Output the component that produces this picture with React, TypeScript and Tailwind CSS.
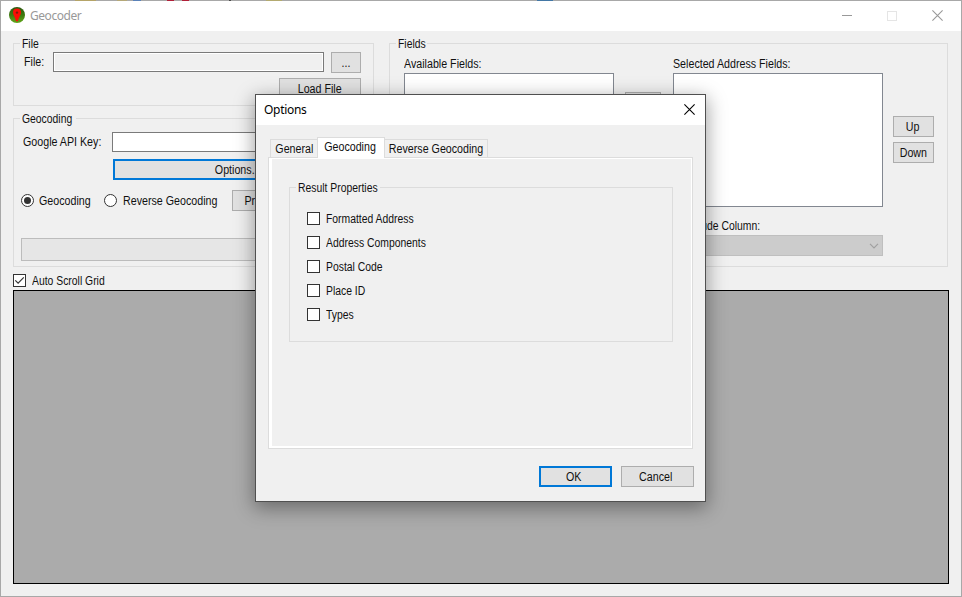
import type { ReactNode } from 'react';

const UI = "font-['Liberation_Sans',Arial,sans-serif] text-[12px] text-[#101010]";
const CAPTION = "font-['Noto_Sans','Open_Sans',sans-serif] text-[12px] leading-4";

type TextProps = { children: ReactNode; className?: string; centered?: boolean; tight?: boolean };

function Text({ children, className = '', centered = false, tight = false }: TextProps) {
  return (
    <span
      className={`block leading-4 whitespace-pre ${centered ? 'origin-center' : 'origin-left'} ${
        tight ? 'scale-x-[0.865]' : 'scale-x-[0.89]'
      } ${className}`}
    >
      {children}
    </span>
  );
}

function Group({ title, legend, className, children }: { title: string; legend: string; className: string; children?: ReactNode }) {
  return (
    <section className={`relative border border-[#dcdcdc] ${className}`}>
      <div className={`absolute -top-[8px] left-[6px] bg-[#f0f0f0] pl-[2px] ${legend}`}>
        <Text tight>{title}</Text>
      </div>
      {children}
    </section>
  );
}

function Button({ children, className = '', primary = false }: { children?: ReactNode; className?: string; primary?: boolean }) {
  return (
    <button
      className={`flex h-[21px] shrink-0 items-center justify-center bg-[#e1e1e1] ${
        primary ? 'border-2 border-[#0078d7]' : 'border border-[#adadad]'
      } ${className}`}
    >
      {children}
    </button>
  );
}

function Radio({ on = false }: { on?: boolean }) {
  return (
    <span className="flex size-[13px] shrink-0 items-center justify-center rounded-full border border-[#333] bg-white">
      {on && <span className="size-[7px] rounded-full bg-[#333]" />}
    </span>
  );
}

function CheckBox({ on = false }: { on?: boolean }) {
  return (
    <span className="mt-[1px] flex size-[13px] shrink-0 items-center justify-center border border-[#333] bg-white">
      {on && (
        <svg width="11" height="11" viewBox="0 0 11 11" fill="none" stroke="#333" strokeWidth="1.2">
          <path d="M1.3 5.3 4.1 8.1 9.8 2.4" />
        </svg>
      )}
    </span>
  );
}

function Pin() {
  return (
    <svg width="16" height="16" viewBox="0 0 16 16" className="shrink-0">
      <defs>
        <linearGradient id="green" x1="0" y1="0" x2="0" y2="1">
          <stop offset="0" stopColor="#2c5a10" />
          <stop offset="0.5" stopColor="#3f7a10" />
          <stop offset="1" stopColor="#62a81c" />
        </linearGradient>
      </defs>
      <circle cx="8" cy="8" r="8" fill="url(#green)" />
      <path d="M8 1.4a4 4 0 0 0-4 4c0 2.5 2.2 4.2 3 8.8h2c.8-4.6 3-6.3 3-8.8a4 4 0 0 0-4-4Z" fill="#fb0d06" />
      <circle cx="8" cy="5.6" r="1.2" fill="#7b1c0c" />
    </svg>
  );
}

function CloseIcon({ color }: { color: string }) {
  return (
    <svg width="11" height="11" viewBox="0 0 11 11" stroke={color} strokeWidth="1.1" className="shrink-0">
      <path d="M.4.4 10.6 10.6M10.6.4.4 10.6" />
    </svg>
  );
}

function DesktopEdge() {
  return (
    <div className="absolute -top-px -left-px flex h-px w-[962px] bg-[#a8a8a8]">
      <span className="ml-[75px] w-[21px] bg-[#b5a468]" />
      <span className="ml-[21px] w-[10px] bg-[#b5a878]" />
      <span className="ml-[6px] w-[8px] bg-[#5a82b8]" />
      <span className="ml-[26px] w-[7px] bg-[#b02038]" />
      <span className="ml-[8px] w-[7px] bg-[#b02038]" />
      <span className="ml-[40px] w-[2px] bg-[#4c4c4c]" />
      <span className="ml-[35px] w-[16px] bg-[#b3aa70]" />
      <span className="ml-[255px] w-[16px] bg-[#4377a5]" />
    </div>
  );
}

const resultProperties = ['Formatted Address', 'Address Components', 'Postal Code', 'Place ID', 'Types'];

function OptionsDialog() {
  return (
    <div
      role="dialog"
      className="absolute top-[93px] left-[254px] flex h-[408px] w-[451px] flex-col border border-[#505050] bg-[#f0f0f0] shadow-[0_5px_18px_1px_rgba(0,0,0,0.38)]"
    >
      <header className={`flex h-[30px] items-start justify-between bg-white pt-[7px] pr-[10px] pl-[8px] tracking-[-0.3px] text-black ${CAPTION}`}>
        <span>Options</span>
        <span className="pt-[2px]">
          <CloseIcon color="#000" />
        </span>
      </header>

      <div className="flex h-[32px] items-end pl-[14px]">
        <div className="flex h-[18px] w-[47px] justify-center border border-r-0 border-b-0 border-[#dcdcdc] pt-[1px]">
          <Text centered>General</Text>
        </div>
        <div className="z-10 -mb-[1px] flex h-[21px] w-[68px] justify-center border border-b-0 border-[#dcdcdc] bg-white pt-[1px]">
          <Text centered className="mr-[1px]">Geocoding</Text>
        </div>
        <div className="flex h-[18px] w-[103px] justify-center border border-b-0 border-l-0 border-[#dcdcdc] pt-[1px]">
          <Text centered>Reverse Geocoding</Text>
        </div>
      </div>

      <div className="ml-[12px] h-[292px] w-[425px] border border-[#dcdcdc] bg-white pt-[1px] pr-[1px] pb-[2px] pl-[3px]">
        <div className="h-full bg-[#f0f0f0] pt-[28px] pl-[17px]">
          <Group title="Result Properties" legend="w-[84px]" className="flex h-[155px] w-[384px] flex-col gap-[8px] pt-[23px] pl-[17px]">
            {resultProperties.map((name) => (
              <label key={name} className="flex h-[16px] items-start gap-[6px]">
                <CheckBox />
                <Text tight>{name}</Text>
              </label>
            ))}
          </Group>
        </div>
      </div>

      <footer className="mt-[17px] flex justify-end gap-[9px] pr-[11px]">
        <Button primary className="w-[73px]">
          <Text centered className="mr-[3px]">OK</Text>
        </Button>
        <Button className="w-[73px]">
          <Text centered className="mr-[3px]">Cancel</Text>
        </Button>
      </footer>
    </div>
  );
}

export default function App() {
  return (
    <div className={`relative flex h-[597px] w-[962px] flex-col overflow-clip border border-[#a8a8a8] bg-[#f0f0f0] [overflow-clip-margin:border-box] ${UI}`}>
      <DesktopEdge />
      <header className={`flex h-[30px] shrink-0 items-start bg-white pt-[6px] pl-[8px] tracking-[-0.45px] text-[#999] ${CAPTION}`}>
        <Pin />
        <span className="ml-[5px] pt-[1px]">Geocoder</span>
        <div className="ml-auto flex items-center gap-[35px] pt-[3px] pr-[18px]">
          <span className="h-px w-[10px] bg-[#999]" />
          <span className="size-[10px] border border-[#e5e5e5]" />
          <CloseIcon color="#999" />
        </div>
      </header>

      <main className="flex flex-col pt-[12px] pl-[12px]">
        <div className="flex gap-[15px]">
          <div className="flex w-[361px] flex-col gap-[12px]">
            <Group title="File" legend="w-[20px]" className="h-[63px] pt-[8px] pr-[12px] pl-[10px]">
              <div className="flex">
                <Text className="mt-[2px] w-[29px]">File:</Text>
                <div className="mr-[7px] h-[20px] w-[271px] border border-[#7a7a7a] bg-[#f0f0f0] shadow-[inset_0_0_0_1px_#fff]" />
                <Button className="w-[30px]">
                  <Text centered>...</Text>
                </Button>
              </div>
              <Button className="mt-[5px] ml-auto w-[82px]">
                <Text centered className="mr-[1px]">Load File</Text>
              </Button>
            </Group>

            <Group title="Geocoding" legend="w-[56px]" className="h-[149px] pt-[13px] pl-[7px]">
              <div className="flex pl-[2px]">
                <Text className="mt-[2px] w-[89px]">Google API Key:</Text>
                <div className="h-[20px] w-[249px] border border-[#7a7a7a] bg-white" />
              </div>
              <Button primary className="mt-[7px] ml-[92px] w-[249px]">
                <Text centered>Options...</Text>
              </Button>
              <div className="mt-[10px] flex items-center">
                <Radio on />
                <Text className="ml-[5px] w-[65px]">Geocoding</Text>
                <Radio />
                <Text className="ml-[6px] w-[109px]">Reverse Geocoding</Text>
                <Button className="w-[66px]">
                  <Text centered className="mr-[3px]">Process</Text>
                </Button>
              </div>
              <div className="mt-[27px] h-[23px] w-[340px] border border-[#bcbcbc] bg-[#e6e6e6]" />
            </Group>
          </div>

          <Group title="Fields" legend="w-[31px]" className="flex h-[224px] w-[559px] pl-[14px]">
            <div className="w-[210px] pt-[12px]">
              <Text className="h-[17px]">Available Fields:</Text>
              <div className="h-[134px] border border-[#828790] bg-white" />
            </div>
            <Button className="mt-[48px] ml-[11px] w-[36px]" />
            <div className="ml-[12px] w-[210px] pt-[12px]">
              <Text className="h-[17px]">Selected Address Fields:</Text>
              <div className="h-[134px] border border-[#828790] bg-white" />
              <Text tight className="h-[28px] pt-[11px]">Longitude Column:</Text>
              <div className="flex h-[21px] items-center justify-end border border-[#bfbfbf] bg-[#ccc] pr-[3px]">
                <svg width="10" height="6" viewBox="0 0 10 6" fill="none" stroke="#a0a0a0" strokeWidth="1.2">
                  <path d="M1 .8 5 4.8 9 .8" />
                </svg>
              </div>
            </div>
            <div className="ml-[10px] flex flex-col gap-[5px] pt-[72px]">
              <Button className="w-[41px]">
                <Text centered className="mr-[2px]">Up</Text>
              </Button>
              <Button className="w-[41px]">
                <Text centered className="mr-[1px]">Down</Text>
              </Button>
            </div>
          </Group>
        </div>

        <label className="mt-[6px] flex h-[16px] items-start gap-[6px]">
          <CheckBox on />
          <Text tight>Auto Scroll Grid</Text>
        </label>
        <div className="mt-[1px] h-[294px] w-[936px] border border-black bg-[#ababab]" />
      </main>

      <OptionsDialog />
    </div>
  );
}
